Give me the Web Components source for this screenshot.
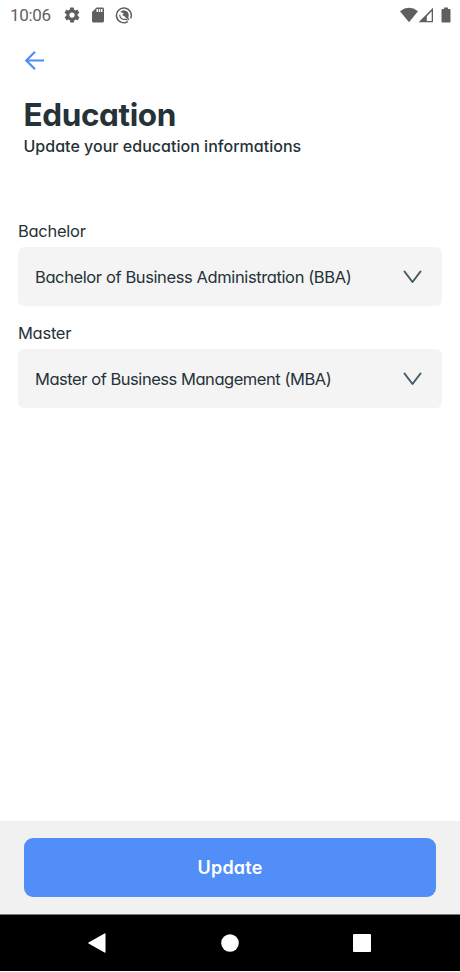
<!DOCTYPE html>
<html lang="en"><head><meta charset="utf-8"><title>Education</title>
<style>html,body{margin:0;background:#fff}</style></head><body>
<education-screen></education-screen>
<script>
const define=(name,html)=>customElements.define(name,class extends HTMLElement{
  constructor(){super();this.attachShadow({mode:'open'}).innerHTML=html;}
});
define('status-bar',`<style>
:host{display:flex;height:30px;padding:0 9px 1px 10px;box-sizing:border-box;align-items:center;justify-content:space-between;color:#5f5f5f;font:17px/29px Roboto,sans-serif}
.g{display:flex;align-items:center}svg{display:block;fill:#5f5f5f}
.t{width:53px;letter-spacing:-.3px;padding-top:1px}
</style><div class="g"><span class="t">10:06</span>
<svg width="18" height="18" viewBox="0 0 24 24"><path d="M19.4 13a7.500 7.500 0 0 0 0-2l2.100-1.600a.5.5 0 0 0 .1-.6l-2-3.500a.5.5 0 0 0-.6-.2l-2.500 1a7 7 0 0 0-1.700-1l-.4-2.600a.5.5 0 0 0-.5-.4h-4a.5.5 0 0 0-.5.4l-.4 2.600a7 7 0 0 0-1.700 1l-2.500-1a.5.5 0 0 0-.6.2l-2 3.500a.5.5 0 0 0 .1.600L4.600 11a7.500 7.500 0 0 0 0 2l-2.100 1.600a.5.5 0 0 0-.1.600l2 3.500c.1.200.4.300.6.200l2.500-1a7 7 0 0 0 1.700 1l.4 2.600c0 .2.200.4.500.4h4c.3 0 .5-.2.500-.4l.4-2.600a7 7 0 0 0 1.700-1l2.500 1c.2.1.5 0 .6-.2l2-3.500a.5.5 0 0 0-.1-.6zM12 15.500a3.500 3.500 0 1 1 0-7 3.500 3.500 0 0 1 0 7z"/></svg>
<svg style="margin-left:8px" width="18" height="18" viewBox="0 0 24 24"><path d="M18 2h-8L4 8v12c0 1.100.9 2 2 2h12c1.100 0 2-.9 2-2V4c0-1.100-.9-2-2-2zm-6 6h-2V4h2zm3 0h-2V4h2zm3 0h-2V4h2z"/></svg>
<svg style="margin-left:8px" width="18" height="18" viewBox="0 0 18 18"><path d="M12.800 15.600A7.400 7.400 0 1 1 15.600 12.400" fill="none" stroke="#5f5f5f" stroke-width="1.500"/><path d="M5.200 6.200A4.800 4.800 0 0 1 13.700 9.500L13.200 12.400L10 9.700L8.300 9.900L7.200 8.500L9 8L7.600 6.800z"/><path d="M4.700 8.700A4.500 4.500 0 0 0 10.500 13.200L12.500 14.200" fill="none" stroke="#5f5f5f" stroke-width="1.200"/><path d="M9.500 9.200L14 13.700" stroke="#5f5f5f" stroke-width="1.400"/></svg>
</div><div class="g">
<svg width="18" height="18" viewBox="0 0 18 18"><path d="M0 5.300Q9-1.600 18 5.300L9 16.300z"/></svg>
<svg width="16" height="18" viewBox="0 0 16 18"><path d="M15 1.800V16.200H.600zM13.700 5.300L8.800 10.200V14.900H13.700z" fill-rule="evenodd"/></svg>
<svg style="margin-left:7px" width="10" height="18" viewBox="0 0 10 18"><path d="M3 1.500h4v1.600h1.700q.8 0 .8.800v11.800q0 .8-.8.800H1.300q-.8 0-.8-.8V3.900q0-.8.8-.8H3z"/></svg>
</div>`);
define('back-button',`<style>:host{display:block;padding:20px 24px 0}svg{display:block}</style>
<svg width="22" height="22" viewBox="0 0 22 22" fill="none" stroke="#4f8df8" stroke-width="2.200"><path d="M20 10.500H2.500M11 1.800L2.300 10.500L11 19.200"/></svg>`);
define('page-heading',`<style>:host{display:block;padding:25px 24px 0;color:#253238}
h1{margin:0 0 0 -.5px;font-size:31.500px;line-height:36px;font-weight:700;letter-spacing:-.4px}
p{margin:1px 0 0 -.5px;font-size:16px;line-height:24px;font-weight:500;white-space:nowrap;letter-spacing:.02px}
</style><h1><slot name="title"></slot></h1><p><slot></slot></p>`);
define('select-field',`<style>:host{display:block;color:#263238;font-size:16.500px}
label{display:block;line-height:25px;height:28px;white-space:nowrap;letter-spacing:-.28px}
.box{height:58.500px;box-sizing:border-box;border-radius:6px;background:#f4f4f4;padding:1px 20px 0 17px;display:flex;align-items:center;justify-content:space-between;white-space:nowrap}
.v{letter-spacing:var(--value-spacing,-.39px)}svg{display:block;flex:none}
</style><label><slot name="label"></slot></label><div class="box"><span class="v"><slot></slot></span>
<svg width="19" height="14" viewBox="0 0 19 14" fill="none" stroke="#455a64" stroke-width="2" stroke-linecap="round" stroke-linejoin="round"><path d="M1.500 1.500L9.500 12L17.500 1.500"/></svg></div>`);
define('action-bar',`<style>:host{display:block;box-sizing:border-box;height:94px;background:#f1f1f1;padding:17px 24px;border-bottom:1px solid #777}
button{display:block;width:100%;height:59px;padding:1px 0 0;border:0;border-radius:9px;background:#518ef8;color:#fff;font:600 18px/58px Inter,sans-serif;font-feature-settings:inherit;letter-spacing:.2px}
</style><button><slot></slot></button>`);
define('nav-bar',`<style>:host{display:flex;height:56px;background:#000;justify-content:center;align-items:center;gap:114px;margin-bottom:1px}svg{display:block;fill:#fff;overflow:visible}</style>
<svg width="18" height="20" viewBox="1 0 18 20"><path d="M16.500.500Q17.500 0 17.500 1V19Q17.500 20 16.500 19.500L.500 10.500Q0 10 .500 9.500z"/></svg>
<svg width="18" height="18" viewBox="0 0 18 18"><circle cx="9" cy="9" r="8.800"/></svg>
<svg width="18" height="18" viewBox="0 0 18 18"><rect width="18" height="18" rx="1"/></svg>`);
define('education-screen',`<style>
:host{display:flex;flex-direction:column;width:460px;height:972px;font-family:Inter,sans-serif;font-feature-settings:"cv11" 1}
main{flex:1}.fields{display:grid;gap:15.500px;padding:61px 18px 0}
.master{--value-spacing:-.46px}
</style><status-bar></status-bar><main><back-button></back-button>
<page-heading><span slot="title">Education</span>Update your education informations</page-heading>
<div class="fields"><select-field><span slot="label">Bachelor</span>Bachelor of Business Administration (BBA)</select-field>
<select-field class="master"><span slot="label">Master</span>Master of Business Management (MBA)</select-field></div>
</main><action-bar>Update</action-bar><nav-bar></nav-bar>`);
</script></body></html>
